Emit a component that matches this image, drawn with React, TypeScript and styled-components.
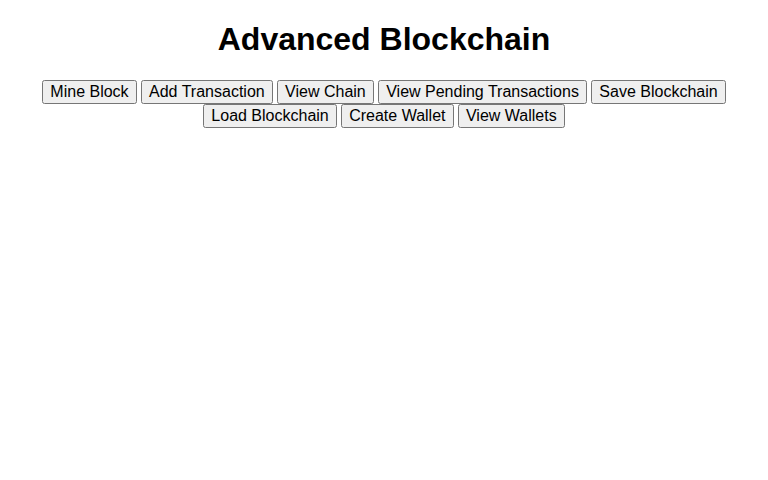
import React from "react";
import styled, { createGlobalStyle } from "styled-components";

const Global = createGlobalStyle`
  body {
    margin: 0;
    font-family: "Liberation Sans", Arial, sans-serif;
    background: #ffffff;
    color: #000000;
  }
`;

const Page = styled.div`
  padding: 21.44px 8px 8px;
  text-align: center;
`;

const Title = styled.h1`
  font-family: "Liberation Sans", Arial, sans-serif;
  font-size: 32px;
  font-weight: bold;
  margin: 0 0 21.44px;
`;

const Toolbar = styled.div`
  display: flex;
  flex-wrap: wrap;
  justify-content: center;
  column-gap: 4.45px;
`;

const ActionButton = styled.button`
  font-family: "Liberation Sans", Arial, sans-serif;
  font-size: 16px;
`;

const actions = [
  "Mine Block",
  "Add Transaction",
  "View Chain",
  "View Pending Transactions",
  "Save Blockchain",
  "Load Blockchain",
  "Create Wallet",
  "View Wallets",
];

export default function App() {
  return (
    <>
      <Global />
      <Page>
        <Title>Advanced Blockchain</Title>
        <Toolbar>
          {actions.map((a) => (
            <ActionButton key={a}>{a}</ActionButton>
          ))}
        </Toolbar>
      </Page>
    </>
  );
}
